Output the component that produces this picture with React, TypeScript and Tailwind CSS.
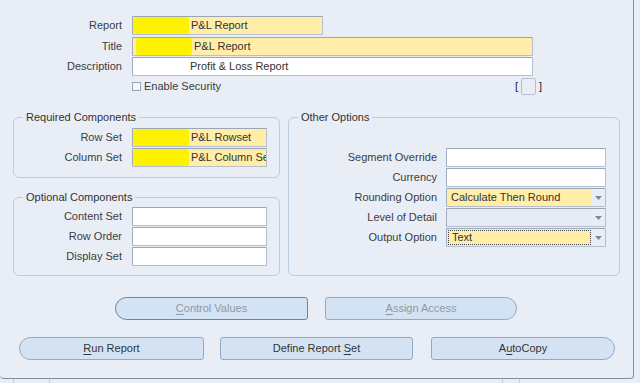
import type { ReactNode } from "react";

type Tone = "white" | "yellow" | "gray";

const toneBg: Record<Tone, string> = {
  white: "bg-white",
  yellow: "bg-[#ffeda8]",
  gray: "bg-[#e6ebf3]",
};

function Field({ w, tone = "white", children }: { w: string; tone?: Tone; children?: ReactNode }) {
  return (
    <div
      className={`${w} ${toneBg[tone]} flex h-[19px] items-center overflow-hidden whitespace-nowrap rounded-[1px] border border-[#b4c0d2] border-t-[#9aa6b8] border-l-[#a2aec0] text-[#333]`}
    >
      {children}
    </div>
  );
}

function Redacted({ text, inset = 0 }: { text: string; inset?: number }) {
  return (
    <>
      <span
        className={`h-[17px] w-[56px] shrink-0 rounded-[3px] bg-[#fff200] ${inset ? "ml-[3px] w-[51px]" : ""}`}
      />
      <span className="ml-[1px] pl-[1px]">{text}</span>
    </>
  );
}

function Select({ tone, value, focused }: { tone: Tone; value?: string; focused?: boolean }) {
  return (
    <div className="flex h-[19px] w-[160px] overflow-hidden rounded-[1px] border border-[#b4c0d2] border-t-[#9aa6b8] border-l-[#a2aec0] text-[#333]">
      <div className={`${toneBg[tone]} flex flex-1 items-stretch p-[1px]`}>
        <div
          className={`flex flex-1 items-center px-[3px] ${focused ? "border border-dotted border-[#444]" : ""}`}
        >
          {value}
        </div>
      </div>
      <div className="flex w-[13px] items-center justify-center bg-[#e9eef6]">
        <svg width="7" height="4" viewBox="0 0 7 4">
          <path d="M0 0h7L3.5 4z" fill="#7d8a9c" />
        </svg>
      </div>
    </div>
  );
}

function Row({ label, labelW, gap, children }: { label: string; labelW: string; gap: string; children: ReactNode }) {
  return (
    <div className="flex items-center">
      <span className={`${labelW} shrink-0 text-right text-[#3c3c3c]`}>{label}</span>
      <div className={gap}>{children}</div>
    </div>
  );
}

function Group({ title, className, children }: { title: string; className: string; children: ReactNode }) {
  return (
    <fieldset className={`rounded-[6px] border border-[#bccce0] ${className}`}>
      <legend className="ml-[9px] px-[3px] leading-[13px] text-[#333]">{title}</legend>
      {children}
    </fieldset>
  );
}

function Btn({
  label,
  mnemonic,
  w,
  shape,
  disabled,
  focused,
}: {
  label: string;
  mnemonic: number;
  w: string;
  shape: string;
  disabled?: boolean;
  focused?: boolean;
}) {
  return (
    <button
      className={`${w} ${shape} flex h-[23px] items-center justify-center border bg-[#d4e3f3] ${
        focused ? "border-[#72839c]" : "border-[#93a8c3]"
      } ${disabled ? "text-[#8e98a6]" : "text-[#333]"}`}
    >
      <span className="whitespace-pre">
        {label.slice(0, mnemonic)}
        <span className="underline underline-offset-[2px]">{label[mnemonic]}</span>
        {label.slice(mnemonic + 1)}
      </span>
    </button>
  );
}

export default function App() {
  return (
    <div className="h-[383px] w-[640px] overflow-hidden bg-[#e9eef6] font-['Liberation_Sans',Arial,sans-serif] text-[11px]">
      <div className="h-[379px] w-[634px] rounded-bl-[4px] rounded-br-[4px] border-r border-b border-[#7f8ea5]">
        <div className="flex flex-col pt-[16px]">
          <Row label="Report" labelW="w-[122px]" gap="ml-[10px]">
            <Field w="w-[191px]" tone="yellow">
              <Redacted text="P&L Report" />
            </Field>
          </Row>
          <div className="mt-[2px]">
            <Row label="Title" labelW="w-[122px]" gap="ml-[10px]">
              <Field w="w-[401px]" tone="yellow">
                <Redacted text="P&L Report" inset={1} />
              </Field>
            </Row>
          </div>
          <div className="mt-[1px]">
            <Row label="Description" labelW="w-[122px]" gap="ml-[10px]">
              <Field w="w-[401px]">
                <span className="pl-[57px]">Profit &amp; Loss Report</span>
              </Field>
            </Row>
          </div>
          <div className="ml-[132px] mt-[2px] flex h-[17px] w-[410px] items-center justify-between">
            <div className="flex items-center gap-[3px] text-[#3c3c3c]">
              <span className="h-[9px] w-[9px] border border-[#9aa6b8] bg-[#f4f6fa]" />
              <span>Enable Security</span>
            </div>
            <div className="flex items-center gap-[3px] text-[#222]">
              <span>[</span>
              <span className="h-[17px] w-[15px] rounded-[2px] border border-[#b4c0d2] bg-[#e9eef6]" />
              <span>]</span>
            </div>
          </div>
        </div>

        <div className="ml-[13px] mt-[16px] flex gap-[8px]">
          <div className="flex w-[267px] flex-col">
            <Group title="Required Components" className="pt-[4px] pb-[10px]">
              <div className="flex flex-col gap-[1px]">
                <Row label="Row Set" labelW="w-[108px]" gap="ml-[10px]">
                  <Field w="w-[135px]" tone="yellow">
                    <Redacted text="P&L Rowset" />
                  </Field>
                </Row>
                <Row label="Column Set" labelW="w-[108px]" gap="ml-[10px]">
                  <Field w="w-[135px]" tone="yellow">
                    <Redacted text="P&L Column Se" />
                  </Field>
                </Row>
              </div>
            </Group>
            <Group title="Optional Components" className="mt-[13px] pt-[3px] pb-[9px]">
              <div className="flex flex-col gap-[1px]">
                <Row label="Content Set" labelW="w-[108px]" gap="ml-[10px]">
                  <Field w="w-[135px]" />
                </Row>
                <Row label="Row Order" labelW="w-[108px]" gap="ml-[10px]">
                  <Field w="w-[135px]" />
                </Row>
                <Row label="Display Set" labelW="w-[108px]" gap="ml-[10px]">
                  <Field w="w-[135px]" />
                </Row>
              </div>
            </Group>
          </div>
          <Group title="Other Options" className="w-[332px] pt-[24px]">
            <div className="flex flex-col gap-[1px]">
              <Row label="Segment Override" labelW="w-[148px]" gap="ml-[9px]">
                <Field w="w-[160px]" />
              </Row>
              <Row label="Currency" labelW="w-[148px]" gap="ml-[9px]">
                <Field w="w-[160px]" />
              </Row>
              <Row label="Rounding Option" labelW="w-[148px]" gap="ml-[9px]">
                <Select tone="yellow" value="Calculate Then Round" />
              </Row>
              <Row label="Level of Detail" labelW="w-[148px]" gap="ml-[9px]">
                <Select tone="gray" />
              </Row>
              <Row label="Output Option" labelW="w-[148px]" gap="ml-[9px]">
                <Select tone="yellow" value="Text" focused />
              </Row>
            </div>
          </Group>
        </div>

        <div className="ml-[115px] mt-[21px] flex gap-[17px]">
          <Btn
            label="Control Values"
            mnemonic={0}
            w="w-[193px]"
            shape="rounded-l-[12px] rounded-r-[3px]"
            disabled
            focused
          />
          <Btn label="Assign Access" mnemonic={0} w="w-[192px]" shape="rounded-l-[3px] rounded-r-[12px]" disabled />
        </div>
        <div className="ml-[19px] mt-[17px] flex">
          <Btn label="Run Report" mnemonic={0} w="w-[185px]" shape="rounded-l-[12px] rounded-r-[3px]" />
          <div className="ml-[16px]">
            <Btn label="Define Report Set" mnemonic={14} w="w-[193px]" shape="rounded-[3px]" />
          </div>
          <div className="ml-[18px]">
            <Btn label="AutoCopy" mnemonic={1} w="w-[184px]" shape="rounded-l-[3px] rounded-r-[12px]" />
          </div>
        </div>
      </div>
      <div className="flex h-[4px]">
        <span className="ml-[13px] w-[37px] border-x border-[#c2ccda]" />
        <span className="ml-[452px] w-[18px] border-x border-[#c2ccda]" />
      </div>
    </div>
  );
}
